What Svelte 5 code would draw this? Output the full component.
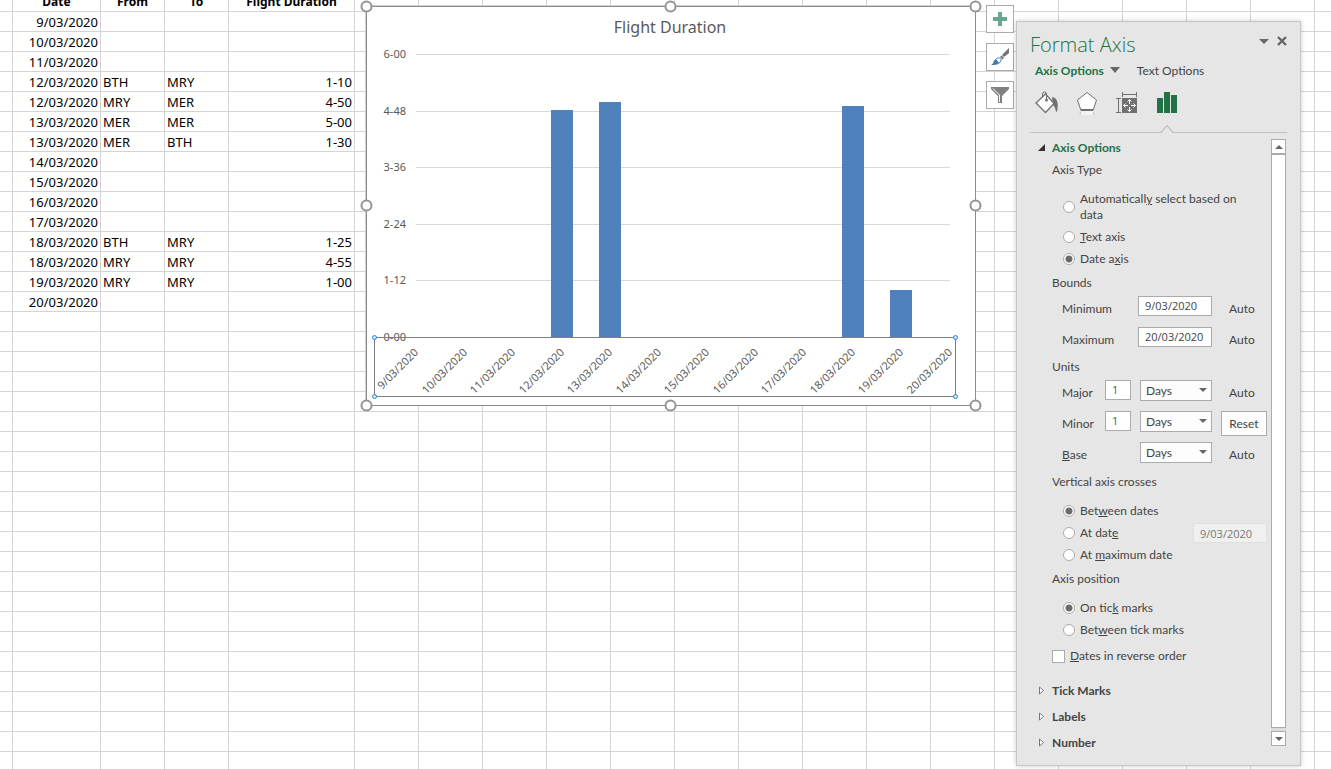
<script lang="ts">
  type Flight = { date: string; from?: string; to?: string; duration?: string };

  const flights: Flight[] = [
    { date: "9/03/2020" },
    { date: "10/03/2020" },
    { date: "11/03/2020" },
    { date: "12/03/2020", from: "BTH", to: "MRY", duration: "1-10" },
    { date: "12/03/2020", from: "MRY", to: "MER", duration: "4-50" },
    { date: "13/03/2020", from: "MER", to: "MER", duration: "5-00" },
    { date: "13/03/2020", from: "MER", to: "BTH", duration: "1-30" },
    { date: "14/03/2020" },
    { date: "15/03/2020" },
    { date: "16/03/2020" },
    { date: "17/03/2020" },
    { date: "18/03/2020", from: "BTH", to: "MRY", duration: "1-25" },
    { date: "18/03/2020", from: "MRY", to: "MRY", duration: "4-55" },
    { date: "19/03/2020", from: "MRY", to: "MRY", duration: "1-00" },
    { date: "20/03/2020" },
  ];

  const blankRows = Array(45).fill(0);
  const blankCols = Array(30).fill(0);

  // chart geometry, relative to the chart's svg
  const plot = { left: 56, right: 590, top: 54, bottom: 337 };
  const dates = [...new Set(flights.map((f) => f.date))];
  const step = (plot.right - plot.left) / (dates.length - 1);
  const ticks = ["6-00", "4-48", "3-36", "2-24", "1-12", "0-00"];
  const handles = [[6, 6], [310, 6], [615, 6], [6, 205], [615, 205], [6, 405], [310, 405], [615, 405]];
  const axisHandles = [[14, 337], [595, 337], [14, 396], [595, 396]];

  function minutes(duration: string) {
    const [h, m] = duration.split("-").map(Number);
    return h * 60 + m;
  }

  function tickY(i: number) {
    return Math.round(plot.top + ((plot.bottom - plot.top) * i) / 5);
  }

  // bars for the same date overlap, so only the longest flight shows
  const bars = dates
    .map((date, i) => {
      const longest = Math.max(0, ...flights.filter((f) => f.date === date && f.duration).map((f) => minutes(f.duration!)));
      const height = Math.floor((longest / 360) * (plot.bottom - plot.top));
      return { x: Math.round(plot.left + i * step) - 11, height };
    })
    .filter((b) => b.height > 0);

  let axisType = $state("date");
  let crosses = $state("between");
  let position = $state("on");
  let reverse = $state(false);
  let minimum = $state("9/03/2020");
  let maximum = $state("20/03/2020");
  let major = $state("1");
  let minor = $state("1");
</script>

{#snippet unitSelect(id: string)}
  <span class="select">
    <select {id} aria-label={id}>
      <option>Days</option>
      <option>Months</option>
      <option>Years</option>
    </select>
    <svg width="8" height="4" viewBox="0 0 8 4"><path d="M0 0h8l-4 4z" fill="#666" /></svg>
  </span>
{/snippet}

<main class="workbook">
  <table class="sheet">
    <colgroup>
      <col class="edge" />
      <col class="date" />
      <col class="place" />
      <col class="place" />
      <col class="duration" />
      {#each blankCols as _}
        <col class="place" />
      {/each}
    </colgroup>
    <thead>
      <tr>
        <td></td>
        <th>Date</th>
        <th>From</th>
        <th>To</th>
        <th>Flight Duration</th>
        {#each blankCols as _}<td></td>{/each}
      </tr>
    </thead>
    <tbody>
      {#each flights as flight}
        <tr>
          <td></td>
          <td class="num">{flight.date}</td>
          <td>{flight.from ?? ""}</td>
          <td>{flight.to ?? ""}</td>
          <td class="num">{flight.duration ?? ""}</td>
          {#each blankCols as _}<td></td>{/each}
        </tr>
      {/each}
      {#each blankRows as _}
        <tr>
          <td></td><td></td><td></td><td></td><td></td>
          {#each blankCols as _}<td></td>{/each}
        </tr>
      {/each}
    </tbody>
  </table>

  <div class="chart-object">
    <svg class="chart" width="622" height="412" viewBox="0 0 622 412" role="img" aria-label="Flight Duration chart">
      <rect x="5" y="5" width="611" height="401" fill="#fff" stroke="none" />
      <path d="M5.5 406V5.5H616" fill="none" stroke="#d0d0d0" />
      <rect x="6.5" y="6.5" width="609" height="399" fill="none" stroke="#8c8c8c" />
      <text class="title" x="310" y="33" text-anchor="middle">Flight Duration</text>

      {#each ticks as tick, i}
        {#if i < 5}
          <path d="M{plot.left} {tickY(i) + 0.5}H{plot.right}" stroke="#d9d9d9" />
        {/if}
        <text class="tick" x="46" y={tickY(i) + 4} text-anchor="end">{tick}</text>
      {/each}

      {#each bars as bar}
        <rect x={bar.x} y={plot.bottom - bar.height} width="22" height={bar.height} fill="#4f81bd" />
      {/each}

      {#each dates as date, i}
        {@const x = Math.round(plot.left + i * step) + 3}
        <text class="tick" {x} y="353" text-anchor="end" transform="rotate(-45 {x} 353)">{date}</text>
      {/each}

      <rect x="14.5" y="337.5" width="581" height="59" fill="none" stroke="#7f7f7f" />
      {#each axisHandles as [x, y]}
        <circle cx={x + 0.5} cy={y + 0.5} r="2" fill="#cfe6fa" stroke="#2b88d8" />
      {/each}
      {#each handles as [x, y]}
        <circle cx={x + 0.5} cy={y + 0.5} r="5" fill="#fff" stroke="#949494" stroke-width="2" />
      {/each}
    </svg>

    <div class="chart-tools">
      <button aria-label="Chart Elements">
        <svg width="20" height="20" viewBox="0 0 20 20"><path d="M8 3h4v5h5v4h-5v5H8v-5H3V8h5z" fill="#67a78f" /></svg>
      </button>
      <button aria-label="Chart Styles">
        <svg width="20" height="20" viewBox="0 0 20 20">
          <path d="M19 1v5l-5 4-2-2z" fill="#737373" />
          <path d="M11.500 8.500l2.500 2.500-1.500 1.500-2.500-2.500z" fill="#737373" />
          <path d="M1 18c3-1 2-5 5-6l4 3c-1 3-6 3-9 3z" fill="#3f7ab8" />
          <path d="M6 12c2-2 5-1 5 1s-1 2-2 3" fill="#fff" stroke="#3f7ab8" />
        </svg>
      </button>
      <button aria-label="Chart Filters">
        <svg width="20" height="20" viewBox="0 0 20 20">
          <path d="M1 2h18v2l-7 7v7H8v-7L1 4z" fill="#808080" />
          <path d="M3 3.500l6.500 6.500v7" fill="none" stroke="#fff" />
        </svg>
      </button>
    </div>
  </div>

  <aside class="panel">
    <header>
      <h1>Format Axis</h1>
      <button class="plain" aria-label="Task pane options">
        <svg width="10" height="5" viewBox="0 0 10 5"><path d="M0 0h10L5 5z" fill="#666" /></svg>
      </button>
      <button class="plain" aria-label="Close">
        <svg width="10" height="10" viewBox="0 0 10 10"><path d="M1 1l8 8M9 1L1 9" stroke="#666" stroke-width="2.400" /></svg>
      </button>
    </header>

    <nav class="tabs">
      <button class="plain active">
        Axis Options
        <svg width="10" height="6" viewBox="0 0 10 6"><path d="M0 0h10L5 6z" fill="#666" /></svg>
      </button>
      <button class="plain">Text Options</button>
    </nav>

    <div class="icons">
      <button class="plain" aria-label="Fill &amp; Line">
        <svg width="24" height="24" viewBox="0 0 24 24">
          <path d="M17 6c5 1 7 5 5 15-2-1-1-4-4-7z" fill="#707070" />
          <path d="M10.500 3L19 12.500l-8.500 9L1 12z" fill="#fff" stroke="#707070" stroke-width="1.300" />
          <path d="M7.500 7V3q0-2 2-2t2 2v6" fill="none" stroke="#707070" />
          <circle cx="11.500" cy="9" r="1.500" fill="#707070" />
        </svg>
      </button>
      <button class="plain" aria-label="Effects">
        <svg width="24" height="24" viewBox="0 0 24 24">
          <path d="M6 20h12l1 4H5z" fill="#f3f3f3" />
          <path d="M5.500 21l-.5 3M18.500 21l.5 3" stroke="#c4c4c4" />
          <path d="M12 1.500l9.500 7.500-3.500 10.500H6L2.500 9z" fill="#fff" stroke="#707070" />
          <path d="M6 19h12" stroke="#707070" stroke-width="2" />
        </svg>
      </button>
      <button class="plain" aria-label="Size &amp; Properties">
        <svg width="24" height="24" viewBox="0 0 24 24">
          <path d="M7.500 1v5M21.500 1v5M7.500 3.500h14M1 7.500h5M1 21.500h5M3.500 7.500v14" fill="none" stroke="#707070" />
          <rect x="7" y="7" width="15" height="15" fill="#707070" />
          <path d="M14.500 9v4M14.500 16v4M9 14.500h4M16 14.500h4M12.500 10.500l2-2 2 2M12.500 18.500l2 2 2-2M10.500 12.500l-2 2 2 2M18.500 12.500l2 2-2 2" fill="none" stroke="#fff" />
        </svg>
      </button>
      <button class="plain" aria-label="Axis Options">
        <svg width="24" height="24" viewBox="0 0 24 24"><path d="M2 7h6v15H2zM9 1h6v21H9zM16 4h6v18h-6z" fill="#217346" /></svg>
      </button>
    </div>

    <div class="divider">
      <span></span>
      <svg width="14" height="8" viewBox="0 0 14 8"><path d="M0 7.500h1l6-7 6 7h1" fill="none" stroke="#c0c0c0" stroke-width="1.200" /></svg>
      <span></span>
    </div>

    <div class="body">
      <div class="options">
        <button class="plain section open">
          <svg width="7" height="7" viewBox="0 0 7 7"><path d="M7 0v7H0z" fill="#333" /></svg>
          Axis Options
        </button>

        <h2>Axis Type</h2>
        <div class="group">
          <label class="wrap"><input type="radio" bind:group={axisType} value="auto" /><span>Automaticall<u>y</u> select based on data</span></label>
          <label><input type="radio" bind:group={axisType} value="text" /><span><u>T</u>ext axis</span></label>
          <label><input type="radio" bind:group={axisType} value="date" /><span>Date a<u>x</u>is</span></label>
        </div>

        <h2>Bounds</h2>
        <div class="bounds">
          <label for="minimum">Minimum</label>
          <input id="minimum" type="text" bind:value={minimum} />
          <span class="auto">Auto</span>
          <label for="maximum">Maximum</label>
          <input id="maximum" type="text" bind:value={maximum} />
          <span class="auto">Auto</span>
        </div>

        <h2>Units</h2>
        <div class="units">
          <label for="major">Major</label>
          <input id="major" type="text" bind:value={major} />
          {@render unitSelect("major-unit")}
          <span class="auto">Auto</span>
          <label for="minor">Minor</label>
          <input id="minor" type="text" bind:value={minor} />
          {@render unitSelect("minor-unit")}
          <button class="reset">Reset</button>
          <label class="base" for="base-unit"><u>B</u>ase</label>
          {@render unitSelect("base-unit")}
          <span class="auto">Auto</span>
        </div>

        <h2>Vertical axis crosses</h2>
        <div class="group">
          <label><input type="radio" bind:group={crosses} value="between" /><span>Bet<u>w</u>een dates</span></label>
          <div class="at-date">
            <label><input type="radio" bind:group={crosses} value="at" /><span>At dat<u>e</u></span></label>
            <input type="text" value="9/03/2020" aria-label="Cross at date" disabled />
          </div>
          <label><input type="radio" bind:group={crosses} value="max" /><span>At <u>m</u>aximum date</span></label>
        </div>

        <h2>Axis position</h2>
        <div class="group">
          <label><input type="radio" bind:group={position} value="on" /><span>On tic<u>k</u> marks</span></label>
          <label><input type="radio" bind:group={position} value="between" /><span>Bet<u>w</u>een tick marks</span></label>
        </div>
        <label class="check"><input type="checkbox" bind:checked={reverse} /><span><u>D</u>ates in reverse order</span></label>

        <div class="closed">
          {#each ["Tick Marks", "Labels", "Number"] as name}
            <button class="plain section">
              <svg width="7" height="9" viewBox="0 0 7 9"><path d="M1.500 1v7l4-3.500z" fill="#fff" stroke="#777" /></svg>
              {name}
            </button>
          {/each}
        </div>
      </div>

      <div class="scrollbar">
        <button aria-label="Scroll up"><svg width="8" height="4" viewBox="0 0 8 4"><path d="M0 4h8L4 0z" fill="#666" /></svg></button>
        <div class="thumb"></div>
        <button aria-label="Scroll down"><svg width="8" height="4" viewBox="0 0 8 4"><path d="M0 0h8L4 4z" fill="#666" /></svg></button>
      </div>
    </div>
  </aside>
</main>

<style>
  :global(body) {
    margin: 0;
    background: #fff;
  }

  .workbook {
    position: relative;
    height: 100vh;
    min-height: 769px;
    overflow: hidden;
    font-family: Lato, "Open Sans", sans-serif;
    font-size: 12px;
    color: #444;
  }

  button, input, select {
    font: inherit;
    color: inherit;
    margin: 0;
    box-sizing: border-box;
  }

  svg {
    display: block;
    flex: none;
  }

  /* spreadsheet */
  .sheet {
    table-layout: fixed;
    width: 1px;
    margin-top: -8px;
    border-collapse: separate;
    border-spacing: 0;
    font-family: "Noto Sans", sans-serif;
    font-size: 13px;
    line-height: 18px;
    color: #000;
  }

  .edge { width: 13px; }
  .date { width: 88px; }
  .place { width: 64px; }
  .duration { width: 126px; }

  .sheet th, .sheet td {
    box-sizing: border-box;
    height: 20px;
    padding: 1px 2px 0;
    border-right: 1px solid #d4d4d4;
    border-bottom: 1px solid #d4d4d4;
    white-space: nowrap;
  }

  .sheet th {
    font-size: 12px;
  }

  .sheet .num {
    text-align: right;
  }

  /* floating chart */
  .chart-object {
    position: absolute;
    top: 0;
    left: 360px;
    display: flex;
    gap: 4px;
  }

  .chart text {
    font-family: "Noto Sans", sans-serif;
    fill: #595959;
  }

  .chart .title { font-size: 16px; }
  .chart .tick { font-size: 11px; }

  .chart-tools {
    display: flex;
    flex-direction: column;
    gap: 10px;
    padding-top: 5px;
  }

  .chart-tools button {
    display: grid;
    place-items: center;
    width: 28px;
    height: 28px;
    padding: 0;
    background: #fff;
    border: 1px solid #ababab;
  }

  /* task pane */
  .panel {
    position: absolute;
    top: 21px;
    right: 30px;
    bottom: 3px;
    display: flex;
    flex-direction: column;
    box-sizing: border-box;
    width: 285px;
    padding: 5px 13px 19px;
    background: #e6e6e6;
    border: 1px solid #c6c6c6;
    box-shadow: 0 0 5px rgba(0, 0, 0, 0.2);
  }

  .plain {
    display: flex;
    align-items: center;
    padding: 0;
    background: none;
    border: none;
  }

  header {
    display: flex;
    align-items: center;
    gap: 8px;
    height: 34px;
    padding-right: 0;
  }

  h1 {
    flex: 1;
    margin: 0;
    font-family: "Open Sans", sans-serif;
    font-size: 20px;
    font-weight: 300;
    color: #217346;
  }

  header .plain {
    height: 20px;
    margin-bottom: 6px;
  }

  .tabs {
    display: flex;
    gap: 17px;
    height: 18px;
    padding-left: 5px;
  }

  .tabs .plain {
    gap: 6px;
  }

  .active {
    font-weight: bold;
    color: #217346;
  }

  .icons {
    display: flex;
    gap: 16px;
    margin-top: 12px;
    padding-left: 5px;
  }

  .divider {
    display: flex;
    align-items: flex-end;
    margin-top: 10px;
  }

  .divider span {
    flex: 1;
    border-bottom: 1px solid #c0c0c0;
  }

  .divider span:first-child {
    flex: none;
    width: 130px;
  }

  .body {
    display: flex;
    flex: 1;
    justify-content: space-between;
    min-height: 0;
    padding-top: 6px;
  }

  .options {
    width: 237px;
  }

  .section {
    gap: 7px;
    height: 26px;
    padding-left: 8px;
    font-weight: bold;
  }

  .section.open {
    height: 16px;
    color: #217346;
  }

  h2 {
    margin: 0 0 0 22px;
    font-size: 12px;
    font-weight: normal;
    line-height: 22px;
  }

  .section + h2 {
    margin-top: 4px;
  }

  .group + h2 {
    margin-top: 2px;
  }

  .group {
    padding: 7px 0 0 33px;
  }

  .group label, .check {
    display: flex;
    align-items: center;
    gap: 5px;
    height: 22px;
    line-height: 16px;
  }

  .group .wrap {
    height: 38px;
  }

  .wrap span {
    width: 170px;
  }

  input[type="radio"], input[type="checkbox"] {
    appearance: none;
    flex: none;
    width: 12px;
    height: 12px;
    background: #fff;
    border: 1px solid #ababab;
  }

  input[type="radio"] {
    border-radius: 50%;
  }

  input[type="radio"]:checked {
    background: radial-gradient(circle, #6a6a6a 3px, #fff 4px);
  }

  input[type="checkbox"] {
    width: 13px;
    height: 13px;
  }

  .check {
    margin-top: 4px;
    padding-left: 22px;
  }

  .bounds, .units {
    display: grid;
    grid-auto-rows: 31px;
    padding-left: 32px;
    line-height: 30px;
  }

  .bounds { grid-template-columns: 76px 83px 46px; }
  .units { grid-template-columns: 43px 35px 81px 46px; }

  .auto {
    padding-left: 8px;
  }

  .base {
    grid-column: span 2;
  }

  input[type="text"] {
    width: 74px;
    height: 20px;
    padding: 0 6px;
    background: #fff;
    border: 1px solid #ababab;
    font-family: "Open Sans", sans-serif;
    font-size: 11px;
  }

  .bounds input, .units input, .select, .reset {
    margin-top: 2px;
  }

  .units input {
    width: 26px;
    color: #217346;
  }

  .select {
    position: relative;
    width: 72px;
    height: 21px;
  }

  select {
    display: block;
    appearance: none;
    width: 72px;
    height: 21px;
    padding: 0 5px;
    background: #fdfdfd;
    border: 1px solid #ababab;
    border-radius: 0;
    line-height: 18px;
  }

  .select svg {
    position: absolute;
    top: 8px;
    right: 5px;
    pointer-events: none;
  }

  .reset {
    height: 25px;
    padding: 0;
    background: #fdfdfd;
    border: 1px solid #ababab;
    line-height: 18px;
  }

  .at-date {
    display: flex;
    justify-content: space-between;
    align-items: center;
    width: 204px;
  }

  .at-date input[type="text"] {
    background: #f0f0ee;
    border-color: #e0e0de;
    color: #777;
  }

  .closed {
    margin-top: 10px;
  }

  .scrollbar {
    display: flex;
    flex-direction: column;
    width: 15px;
    margin-right: 1px;
    background: #dcdcdc;
  }

  .scrollbar button {
    display: grid;
    place-items: center;
    height: 15px;
    padding: 0;
    background: #fff;
    border: 1px solid #ababab;
  }

  .thumb {
    flex: 1;
    margin-bottom: 3px;
    background: #fff;
    border: 1px solid #ababab;
  }
</style>
